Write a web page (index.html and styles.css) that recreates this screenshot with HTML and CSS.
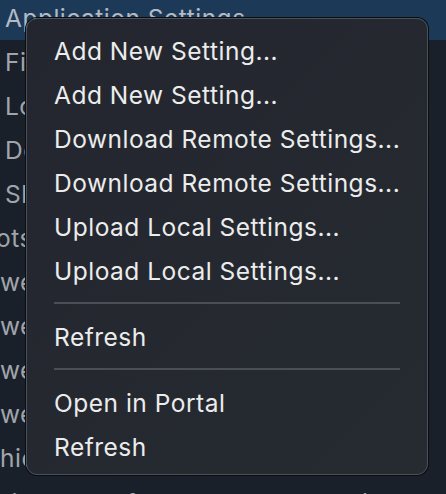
FILE: index.html
```html
<!DOCTYPE html>
<html>
<head>
<meta charset="utf-8">
<link rel="stylesheet" href="styles.css">
</head>
<body>
<div class="list">
  <div class="row selected">Application Settings</div>
  <div class="row">File Share Settings</div>
  <div class="row">Log Stream Settings</div>
  <div class="row">Deployment Slots</div>
  <div class="row">Slots and Swaps</div>
  <div class="row clip shift">ots and Swaps</div>
  <div class="row clip">webjobs</div>
  <div class="row clip">webhooks</div>
  <div class="row clip">websites</div>
  <div class="row clip">webapps</div>
  <div class="row clip">hic Settings Manager Set</div>
  <div class="row last">licenses of Components and libs</div>
</div>
<div class="menu">
  <div class="item">Add New Setting...</div>
  <div class="item">Add New Setting...</div>
  <div class="item">Download Remote Settings...</div>
  <div class="item">Download Remote Settings...</div>
  <div class="item">Upload Local Settings...</div>
  <div class="item">Upload Local Settings...</div>
  <div class="sep"></div>
  <div class="item">Refresh</div>
  <div class="sep"></div>
  <div class="item">Open in Portal</div>
  <div class="item">Refresh</div>
</div>
</body>
</html>
```
FILE: styles.css
```css
html, body {
  margin: 0;
  padding: 0;
  background: #19202a;
  overflow: hidden;
  height: 494px;
}
body {
  font-family: Inter, "Noto Sans", sans-serif;
  font-size: 24.5px;
  letter-spacing: 0.5px;
  position: relative;
}
.list {
  margin-top: -4px;
}
.row {
  height: 44px;
  line-height: 44px;
  padding-left: 5px;
  color: #a1a5ab;
  white-space: nowrap;
}
.row.clip {
  padding-left: 0;
}
.row.shift {
  text-indent: -4px;
}
.row.last {
  padding-top: 1px;
}
.row.selected {
  background: #1c3a58;
  color: #b3bac3;
}
.menu {
  position: absolute;
  left: 26px;
  top: 18px;
  width: 402px;
  height: 457px;
  box-sizing: border-box;
  padding: 10px 0 7px;
  background: linear-gradient(135deg, #23262e, #262a31);
  border: 1px solid #4c5058;
  border-radius: 11px;
  box-shadow: 0 0 0 1px #0b0d10;
}
.item {
  height: 44px;
  line-height: 44px;
  padding-left: 27px;
  color: #ececec;
  white-space: nowrap;
}
.sep {
  height: 2px;
  margin: 9px 27px 11px 27px;
  background: #4a4e56;
}
```
